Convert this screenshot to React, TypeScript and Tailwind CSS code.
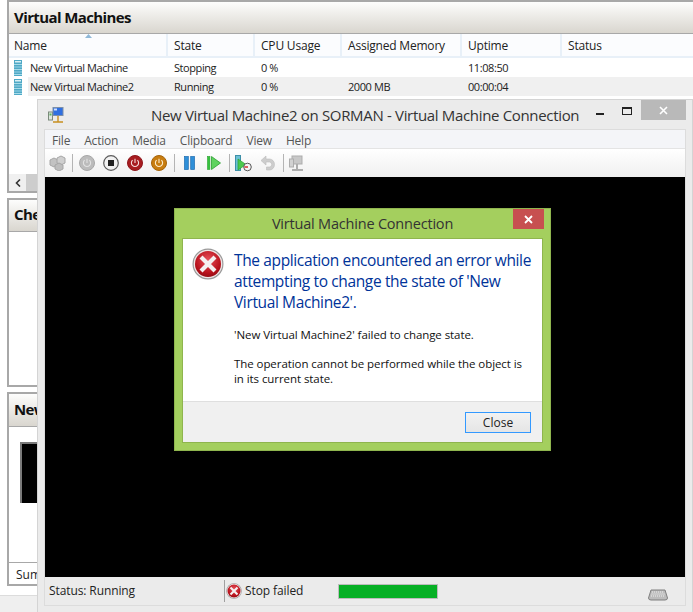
import React from "react";

const font = "[font-family:'Open_Sans','Noto_Sans',sans-serif]";

function ServerIcon() {
  return (
    <svg width="8" height="16" viewBox="0 0 8 16" className="shrink-0">
      <rect x="0" y="0" width="8" height="16" fill="#4fa9c6" />
      <rect x="1" y="1" width="6" height="1.5" fill="#d8f0f5" />
      <rect x="0" y="4" width="8" height="1" fill="#a8dbe9" />
      <rect x="0" y="6.5" width="8" height="1" fill="#98d2e3" />
      <rect x="0" y="9" width="8" height="1" fill="#a8dbe9" />
      <rect x="0" y="11.5" width="8" height="1" fill="#98d2e3" />
      <rect x="0" y="14" width="8" height="1" fill="#a8dbe9" />
    </svg>
  );
}

function ErrorIcon({ size }: { size: number }) {
  return (
    <svg width={size} height={size} viewBox="0 0 32 32" className="shrink-0">
      <defs>
        <radialGradient id={`e${size}`} cx="50%" cy="35%" r="70%">
          <stop offset="0%" stopColor="#e8505a" />
          <stop offset="70%" stopColor="#b8121c" />
          <stop offset="100%" stopColor="#8c0a12" />
        </radialGradient>
      </defs>
      <circle cx="16" cy="16" r="15.5" fill="#9a9a9a" />
      <circle cx="16" cy="16" r="14.3" fill="#f0e6e6" />
      <circle cx="16" cy="16" r="13" fill={`url(#e${size})`} />
      <path d="M10.5 10.5 L21.5 21.5 M21.5 10.5 L10.5 21.5" stroke="#f4f0f0" strokeWidth="4.2" strokeLinecap="square" />
    </svg>
  );
}

function PowerGlyph({ color }: { color: string }) {
  return (
    <g fill="none" stroke={color} strokeWidth="1.1">
      <path d="M5.6 5.2 A3.6 3.6 0 1 0 10.4 5.2" />
      <path d="M8 3.8 V8" />
    </g>
  );
}

function Ball({ fill, rim, glyph }: { fill: string; rim: string; glyph: string }) {
  return (
    <svg width="16" height="16" viewBox="0 0 16 16" className="shrink-0">
      <circle cx="8" cy="8" r="7.5" fill={fill} stroke={rim} />
      <PowerGlyph color={glyph} />
    </svg>
  );
}

function Toolbar() {
  const sep = <div className="w-px h-[18px] bg-[#b4b4b4]" />;
  return (
    <div className="h-[28px] bg-gradient-to-b from-[#ffffff] to-[#f0f0f0] flex items-center pl-[4px]">
      <svg width="17" height="16" viewBox="0 0 17 16">
        <path d="M1 5 L5 3 L9 5 V10 L5 12 L1 10 Z" fill="#c2c2c2" stroke="#a6a6a6" />
        <path d="M8 3 L12 1 L16 3 V8 L12 10 L8 8 Z" fill="#cfcfcf" stroke="#a6a6a6" />
        <path d="M6 10 L10 8 L14 10 V14 L10 16 L6 14 Z" fill="#bdbdbd" stroke="#a6a6a6" />
      </svg>
      <div className="ml-[6px]">{sep}</div>
      <div className="ml-[6px]"><Ball fill="#bcbcbc" rim="#a8a8a8" glyph="#e2e2e2" /></div>
      <div className="ml-[8px]">
        <svg width="16" height="16" viewBox="0 0 16 16">
          <circle cx="8" cy="8" r="7.3" fill="#f2f2f2" stroke="#5c5c5c" strokeWidth="1.2" />
          <rect x="5" y="5" width="6" height="6" fill="#222" />
        </svg>
      </div>
      <div className="ml-[8px]"><Ball fill="#a81c20" rim="#8e171c" glyph="#f6dcdc" /></div>
      <div className="ml-[8px]"><Ball fill="#c87d10" rim="#a5640a" glyph="#fbeccc" /></div>
      <div className="ml-[7px]">{sep}</div>
      <div className="ml-[9px]">
        <svg width="11" height="14" viewBox="0 0 11 14">
          <rect x="0.5" y="0.5" width="3.8" height="13" fill="#2f8fd8" stroke="#1d6bb0" strokeWidth="0.7" />
          <rect x="6.7" y="0.5" width="3.8" height="13" fill="#2f8fd8" stroke="#1d6bb0" strokeWidth="0.7" />
        </svg>
      </div>
      <div className="ml-[12px]">
        <svg width="14" height="14" viewBox="0 0 14 14">
          <rect x="0.5" y="0.5" width="2.4" height="13" fill="#34c43c" stroke="#2aa030" strokeWidth="0.6" />
          <path d="M4.5 0.5 L13.5 7 L4.5 13.5 Z" fill="#5fd35f" stroke="#2aa030" strokeWidth="0.8" />
        </svg>
      </div>
      <div className="ml-[8px]">{sep}</div>
      <div className="ml-[5px]">
        <svg width="17" height="17" viewBox="0 0 17 17">
          <rect x="0.5" y="0.5" width="5" height="15" fill="#6cc0d4" stroke="#3d8fa8" />
          <path d="M3 4 L11 9.5 L3 15 Z" fill="#4cc94c" stroke="#2aa030" strokeWidth="0.7" />
          <circle cx="12.5" cy="12" r="3.8" fill="#f4f4f4" stroke="#555" />
          <path d="M9.5 12 H13" stroke="#d02020" strokeWidth="1.4" />
        </svg>
      </div>
      <div className="ml-[8px]">
        <svg width="16" height="16" viewBox="0 0 16 16">
          <path d="M1 5.5 L6 1 V4 H9.5 A5 5.5 0 0 1 9.5 15 H6.5 V12 H9.5 A2.2 2.5 0 0 0 9.5 7 H6 V10 Z" fill="#cdcdcd" stroke="#bcbcbc" strokeWidth="0.6" />
        </svg>
      </div>
      <div className="ml-[7px]">{sep}</div>
      <div className="ml-[5px]">
        <svg width="17" height="17" viewBox="0 0 17 17">
          <rect x="3" y="1" width="10" height="8" fill="#c8c8c8" stroke="#adadad" />
          <rect x="0.5" y="4" width="4" height="8" fill="#d2d2d2" stroke="#adadad" />
          <path d="M8 9 V13 M3 15 H14 M8 13 V15" stroke="#adadad" strokeWidth="2" />
        </svg>
      </div>
    </div>
  );
}

function VmRow({ name, state, memory, uptime, alt }: { name: string; state: string; memory: string; uptime: string; alt?: boolean }) {
  const bg = alt ? "bg-[#f0f0f0]" : "bg-white";
  return (
    <div className="flex h-[19px] items-center text-[11px] text-[#222] tracking-[-0.42px]">
      <div className="w-[19px] pl-[5px] flex items-center"><ServerIcon /></div>
      <div className={`w-[141px] h-full flex items-center pl-[2px] pt-[1px] ${bg}`}>{name}</div>
      <div className={`w-[87px] h-full flex items-center pl-[5px] pt-[1px] ${bg}`}>{state}</div>
      <div className={`w-[87px] h-full flex items-center pl-[5px] pt-[1px] ${bg}`}>0 %</div>
      <div className={`w-[120px] h-full flex items-center pl-[5px] pt-[1px] ${bg}`}>{memory}</div>
      <div className={`flex-1 h-full flex items-center pl-[5px] pt-[1px] ${bg}`}>{uptime}</div>
    </div>
  );
}

function HeaderCell({ label, w, pl }: { label: string; w: string; pl: string }) {
  return (
    <div className={`${w} ${pl} h-full border-r-2 border-[#e8f0f8] flex items-center pt-[1px] text-[12px] text-[#222] tracking-[-0.2px]`}>{label}</div>
  );
}

function PanelHeader({ text, h, extra }: { text: string; h: string; extra?: string }) {
  return (
    <div className={`${h} ${extra ?? ""} bg-gradient-to-b from-[#fdfdfc] to-[#d9d6cf] border-b border-[#a8a8a8] flex items-center pl-[5px] text-[15px] font-bold text-[#111] tracking-[-0.6px]`}>
      {text}
    </div>
  );
}

function Dialog() {
  return (
    <div className="absolute left-[174px] top-[208px] w-[377px] h-[243px] bg-[#a4cf5e] border border-[#8fb54e] flex flex-col px-[7px] pb-[7px]">
      <div className="h-[29px] relative flex items-center justify-center text-[14.5px] text-[#333] tracking-[-0.2px]">
        Virtual Machine Connection
        <div className="absolute right-[-1px] top-0 w-[31px] h-[20px] bg-[#c75050] flex items-center justify-center">
          <svg width="9" height="9" viewBox="0 0 9 9">
            <path d="M1 1 L8 8 M8 1 L1 8" stroke="#fff" strokeWidth="1.8" />
          </svg>
        </div>
      </div>
      <div className="flex-1 bg-white border border-[#8fb54e] flex flex-col">
        <div className="flex-1 flex pl-[9px] pr-[8px] pt-[9px]">
          <ErrorIcon size={32} />
          <div className="ml-[10px] flex-1 pt-[2px]">
            <div className="text-[15.5px] leading-[21px] text-[#003399] tracking-[-0.37px]">
              <div>The application encountered an error while</div>
              <div>attempting to change the state of 'New</div>
              <div>Virtual Machine2'.</div>
            </div>
            <div className="mt-[14px] text-[11.5px] leading-[15px] text-[#111] tracking-[-0.07px]">'New Virtual Machine2' failed to change state.</div>
            <div className="mt-[14px] text-[11.5px] leading-[15px] text-[#111] tracking-[-0.07px]">
              <div>The operation cannot be performed while the object is</div>
              <div>in its current state.</div>
            </div>
          </div>
        </div>
        <div className="h-[41px] pt-[1px] bg-[#f0f0f0] border-t border-[#dfdfdf] flex items-center justify-end pr-[11px]">
          <div className="w-[66px] h-[21px] border border-[#3399ff] bg-gradient-to-b from-[#f2f2f2] to-[#e5e5e5] flex items-center justify-center text-[12px] text-[#222]">Close</div>
        </div>
      </div>
    </div>
  );
}

function VmWindow() {
  return (
    <div className="absolute left-[37px] top-[99px] w-[656px] h-[513px] bg-[#ebebeb] border-l border-t border-r border-[#d4d4d4] flex flex-col pl-[6px] pr-[6px]">
      <div className="h-[29px] relative flex items-center pt-[2px]">
        <svg width="16" height="16" viewBox="0 0 16 16" className="absolute left-[4px] top-[7px]">
          <rect x="0.5" y="5" width="4" height="8" fill="#dfe6df" stroke="#7a8a7a" />
          <rect x="1.5" y="6.5" width="2" height="2" fill="#5ab45a" />
          <rect x="5" y="0.5" width="10" height="8" fill="#2f6fe0" stroke="#7d8fa8" />
          <rect x="6" y="1.5" width="3" height="2" fill="#cfe0ff" />
          <path d="M10 9 V13 M5 15 H15 M10 13 V15" stroke="#c89020" strokeWidth="1.4" />
        </svg>
        <div className="ml-[107px] text-[15px] text-[#333] tracking-[-0.33px] whitespace-nowrap">New Virtual Machine2 on SORMAN - Virtual Machine Connection</div>
        <div className="absolute left-[552px] top-[13px] w-[8px] h-[2px] bg-[#222]" />
        <div className="absolute left-[578px] top-[7px] w-[10px] h-[8px] border border-[#222] border-t-2" />
        <div className="absolute left-[597px] top-0 w-[45px] h-[20px] bg-[#b9b9b9] flex items-center justify-center">
          <svg width="9" height="9" viewBox="0 0 9 9">
            <path d="M1 1 L8 8 M8 1 L1 8" stroke="#fff" strokeWidth="1.6" />
          </svg>
        </div>
      </div>
      <div className="flex-1 border border-[#dcdcdc] flex flex-col">
        <div className="h-[19px] shrink-0 pt-[4px] bg-[#f4f5f8] border-b border-[#e4e4e4] flex items-center pl-[7px] gap-[14px] text-[12px] text-[#555] tracking-[-0.2px]">
          <span>File</span>
          <span>Action</span>
          <span>Media</span>
          <span>Clipboard</span>
          <span>View</span>
          <span>Help</span>
        </div>
        <Toolbar />
        <div className="h-[400px] shrink-0 bg-black" />
        <div className="h-[28px] shrink-0 flex items-center text-[12px] text-[#222] relative">
          <div className="w-[179px] pl-[4px] tracking-[-0.1px]">Status: Running</div>
          <div className="w-px h-[22px] bg-[#a0a0a0]" />
          <div className="ml-[1px]"><ErrorIcon size={16} /></div>
          <div className="ml-[3px] w-[93px] tracking-[-0.1px]">Stop failed</div>
          <div className="w-[100px] h-[15px] bg-[#06b025] border border-[#bcbcbc]" />
          <svg width="20" height="12" viewBox="0 0 20 12" className="absolute right-[17px] top-[12px]">
            <path d="M3 1 H17 L19.5 9 Q19.5 11 17 11 H3 Q0.5 11 0.5 9 Z" fill="#bcbcbc" stroke="#7f7f7f" />
            <path d="M4 3 H16 M3.5 5 H16.5 M3 7 H17" stroke="#eeeeee" strokeWidth="1" strokeDasharray="1 1" />
          </svg>
        </div>
      </div>
      <div className="h-[6px] shrink-0" />
    </div>
  );
}

export default function App() {
  return (
    <div className={`relative w-[693px] h-[612px] overflow-hidden bg-white ${font}`}>
      <div className="pl-[7px] flex flex-col h-full">
        <div className="h-[193px] border-2 border-r-0 border-[#a8a8a8] flex flex-col">
          <PanelHeader text="Virtual Machines" h="h-[32px]" />
          <div className="h-[24px] flex bg-[#fbfcfe] border-b-2 border-[#e8f0f8] relative">
            <HeaderCell label="Name" w="w-[159px]" pl="pl-[5px]" />
            <HeaderCell label="State" w="w-[87px]" pl="pl-[6px]" />
            <HeaderCell label="CPU Usage" w="w-[87px]" pl="pl-[6px]" />
            <HeaderCell label="Assigned Memory" w="w-[120px]" pl="pl-[6px]" />
            <HeaderCell label="Uptime" w="w-[100px]" pl="pl-[6px]" />
            <div className="flex-1 flex items-center pl-[6px] pt-[1px] text-[12px] text-[#222] tracking-[-0.2px]">Status</div>
            <svg width="7" height="4" viewBox="0 0 7 4" className="absolute left-[76px] top-0">
              <path d="M0 4 L3.5 0 L7 4 Z" fill="#8fb8d8" />
            </svg>
          </div>
          <VmRow name="New Virtual Machine" state="Stopping" memory="" uptime="11:08:50" />
          <VmRow name="New Virtual Machine2" state="Running" memory="2000 MB" uptime="00:00:04" alt />
          <div className="flex-1" />
          <div className="h-[17px] bg-[#e8e8e8] flex items-center">
            <div className="w-[17px] h-full bg-[#f0f0f0] flex items-center justify-center text-[#333]">
              <svg width="6" height="8" viewBox="0 0 6 8"><path d="M5 0.5 L1.5 4 L5 7.5" fill="none" stroke="#333" strokeWidth="1.6" /></svg>
            </div>
            <div className="flex-1 h-full bg-[#cdcdcd]" />
          </div>
        </div>
        <div className="mt-[5px] h-[189px] border-2 border-r-0 border-[#a8a8a8] flex flex-col">
          <PanelHeader text="Che" h="h-[32px]" extra="pb-[2px]" />
        </div>
        <div className="mt-[5px] h-[194px] border-2 border-r-0 border-[#a8a8a8] flex flex-col">
          <PanelHeader text="New" h="h-[33px]" extra="pb-[2px]" />
          <div className="flex-1 pl-[11px] pt-[15px]">
            <div className="w-[40px] h-[61px] bg-black border-2 border-[#7a7a7a] border-b-0" />
          </div>
          <div className="h-[22px] border-t border-[#a8a8a8] pt-[3px] flex items-center pl-[7px] text-[12px] text-[#222]">Summary</div>
        </div>
        <div className="mt-[9px] -ml-[7px] flex-1 bg-[#efefef] border-t border-[#dcdcdc]" />
      </div>
      <VmWindow />
      <Dialog />
    </div>
  );
}
